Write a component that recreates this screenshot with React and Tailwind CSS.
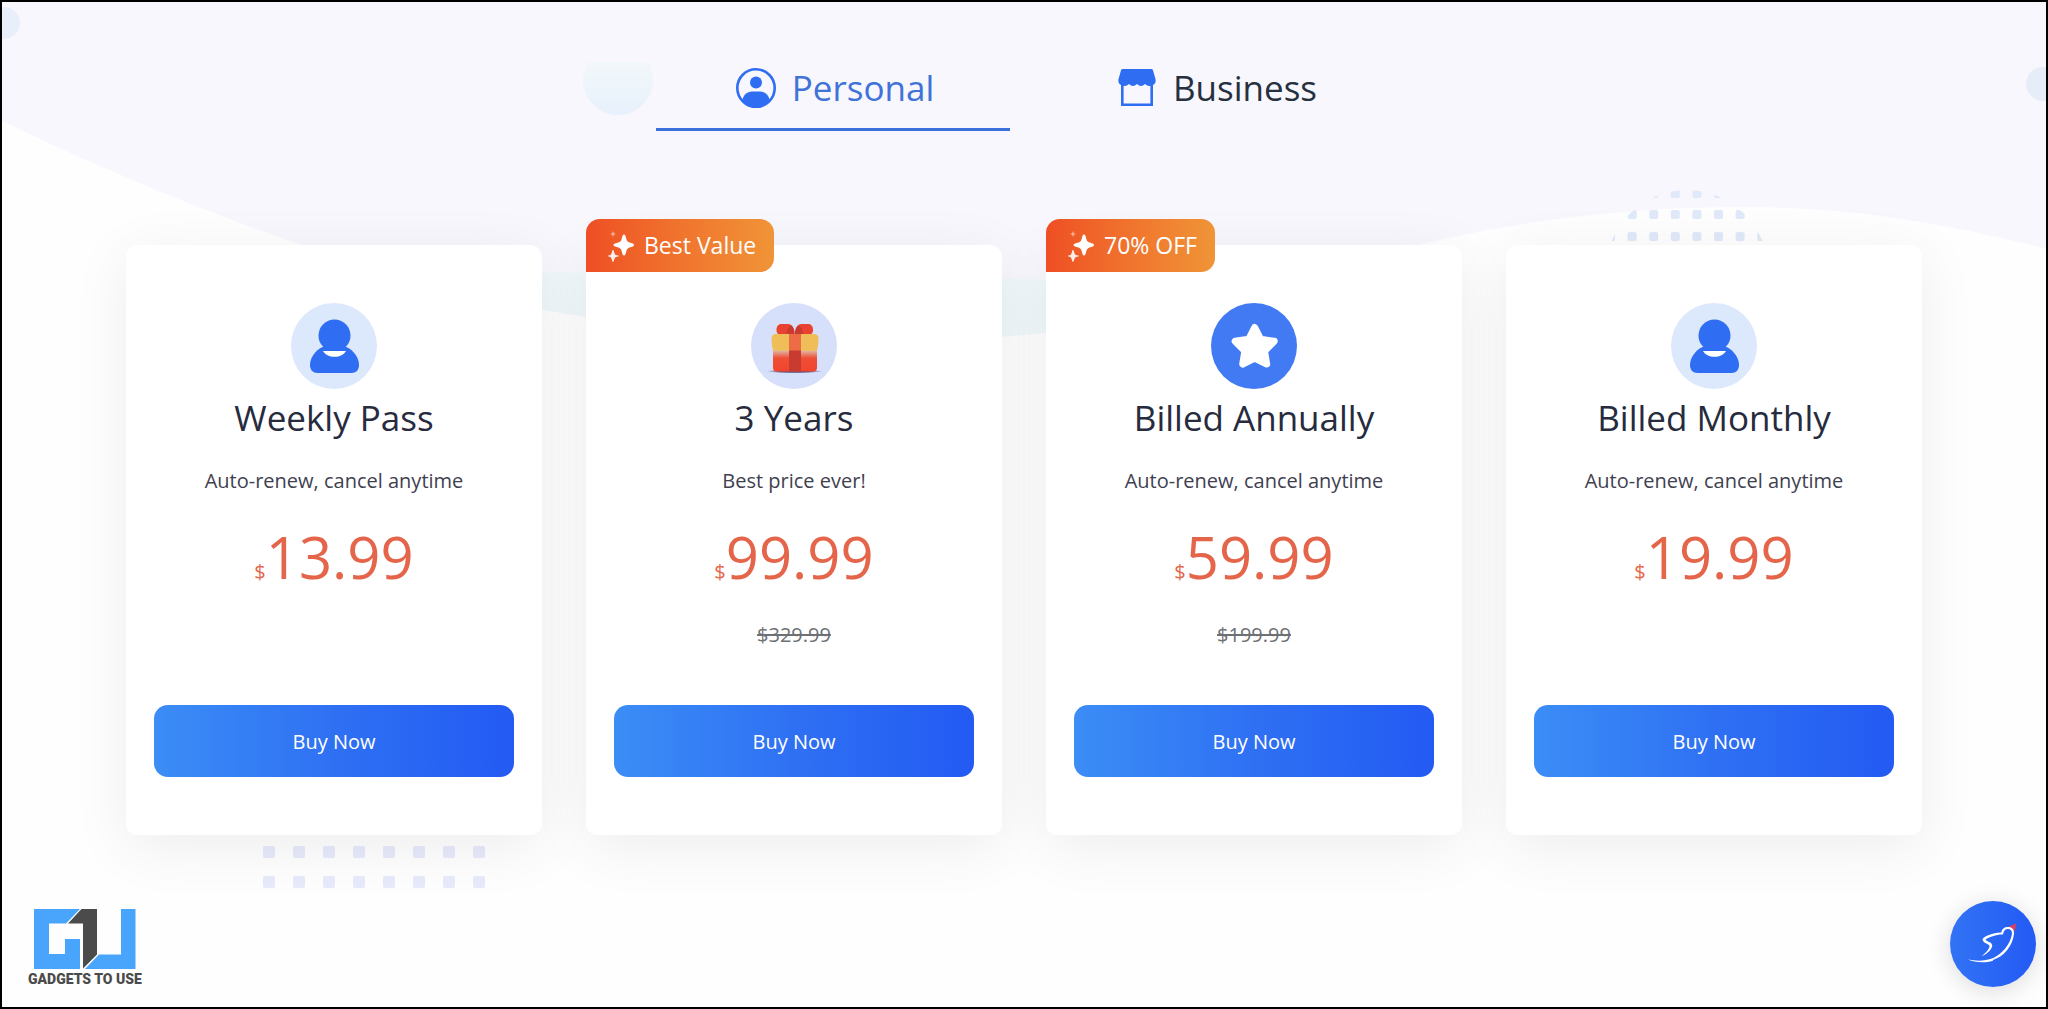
import { useState } from "react";

const plans = [
  {
    id: "weekly",
    name: "Weekly Pass",
    note: "Auto-renew, cancel anytime",
    price: "13.99",
    Icon: UserBadge,
  },
  {
    id: "three-years",
    name: "3 Years",
    note: "Best price ever!",
    price: "99.99",
    oldPrice: "$329.99",
    ribbon: "Best Value",
    Icon: GiftBadge,
  },
  {
    id: "annual",
    name: "Billed Annually",
    note: "Auto-renew, cancel anytime",
    price: "59.99",
    oldPrice: "$199.99",
    ribbon: "70% OFF",
    Icon: StarBadge,
  },
  {
    id: "monthly",
    name: "Billed Monthly",
    note: "Auto-renew, cancel anytime",
    price: "19.99",
    Icon: UserBadge,
  },
];

const tabs = [
  { id: "personal", label: "Personal", Icon: PersonIcon },
  { id: "business", label: "Business", Icon: StoreIcon },
];

function PersonIcon() {
  return (
    <svg className="size-10" viewBox="0 0 40 40" fill="none" aria-hidden="true">
      <circle cx="20" cy="20" r="18.7" stroke="#2f6df2" strokeWidth="2.6" />
      <circle cx="20" cy="14.5" r="6" fill="#2f6df2" />
      <path
        d="M6 33.5C7 27 11 23.5 16 23.5h8c5 0 9 3.5 10 10C30.5 37.5 25.5 40 20 40S9.5 37.5 6 33.5Z"
        fill="#2f6df2"
      />
    </svg>
  );
}

function StoreIcon() {
  return (
    <svg className="size-10" viewBox="0 0 40 40" fill="none" aria-hidden="true">
      <path d="M5.3 14v22.7h29.4V14" stroke="#2f6df2" strokeWidth="2.6" />
      <path
        d="M5.5 1h29q1 0 1.4 1L38.6 11.5Q39.2 16.5 34.5 17.5q-3.500 1.500-6.500-1.500-4 3.800-8 0-4 3.800-8 0-3 3-6.500 1.500Q.8 16.500 1.4 11.5L4.1 2q.4-1 1.4-1Z"
        fill="#2f6df2"
      />
    </svg>
  );
}

function UserBadge() {
  return (
    <svg className="size-[86px]" viewBox="0 0 86 86" aria-hidden="true">
      <circle cx="43" cy="43" r="43" fill="#dce8fb" />
      <path
        d="M31.5 44C24 47.5 19 55 19 62c0 5 3 8 7.5 8h34c4.5 0 7.5-3 7.5-8 0-7-5-14.5-12.5-18Z"
        fill="#2f6df2"
      />
      <circle cx="43.5" cy="32.5" r="16" fill="#2f6df2" />
      <path d="M32 48h23c-2 3.8-6.5 5.8-11.5 5.8S34 51.8 32 48Z" fill="#fff" />
    </svg>
  );
}

function GiftBadge() {
  return (
    <svg className="size-[86px]" viewBox="0 0 86 86" aria-hidden="true">
      <defs>
        <linearGradient id="giftBody" x1="0" y1="0" x2="0" y2="1">
          <stop offset="0.15" stopColor="#e2b5a6" />
          <stop offset="0.45" stopColor="#ee4f35" />
          <stop offset="1" stopColor="#f1452f" />
        </linearGradient>
        <radialGradient id="giftShadow">
          <stop offset="0.5" stopColor="#55507f" />
          <stop offset="1" stopColor="#55507f" stopOpacity="0" />
        </radialGradient>
      </defs>
      <circle cx="43" cy="43" r="43" fill="#d6e0fb" />
      <ellipse cx="43.5" cy="68.3" rx="28" ry="2" fill="url(#giftShadow)" />
      <rect x="22" y="44" width="44" height="24.5" rx="4" fill="url(#giftBody)" />
      <path
        d="M24.500 31h38.500q4.500 0 4.500 4.500 0 6-1.500 12.200H22Q20.500 41.500 20.500 35.500q0-4.500 4-4.500Z"
        fill="#f0be58"
      />
      <path d="M38 31h12v17H38Z" fill="#ee6c45" />
      <path d="M38 47.5h12v21H38Z" fill="#c93a30" />
      <path d="M43.5 31H27c-3-3-1.5-10 3-10h7c4 0 6.5 4 6.500 10Z" fill="#ea4231" />
      <path d="M44 31H60.5c3-3 1.500-10-3-10h-7c-4 0-6.500 4-6.500 10Z" fill="#ea4231" />
      <path
        d="M43.5 31H35.500c0-4 2-7 4.500-8.500 2.500 1.500 3.500 4.500 3.500 8.500ZM44 31h8c0-4-2-7-4.500-8.500-2.500 1.500-3.500 4.500-3.500 8.500Z"
        fill="#c93a30"
      />
    </svg>
  );
}

function StarBadge() {
  return (
    <svg className="size-[86px]" viewBox="0 0 86 86" aria-hidden="true">
      <circle cx="43" cy="43" r="43" fill="#427af3" />
      <path
        d="M43.7 24.5 49.7 36.3 63.2 38.3 53.5 47.9 55.7 61 43.7 55 31.7 61 33.9 47.9 24.2 38.3 37.7 36.3Z"
        fill="#fff"
        stroke="#fff"
        strokeWidth="7"
        strokeLinejoin="round"
      />
    </svg>
  );
}

function Sparkles() {
  return (
    <svg className="h-8 w-[26px]" viewBox="0 0 26 32" fill="#fff" aria-hidden="true">
      <path d="M16 4.500c1.200 0 1.600 1.500 2.200 4 .6 2.600 1.700 3.700 4.300 4.300 2.500.6 3.500 1 3.500 2.200s-1 1.600-3.500 2.200c-2.600.6-3.700 1.700-4.300 4.300-.6 2.500-1 4-2.200 4s-1.600-1.500-2.200-4c-.6-2.600-1.700-3.700-4.300-4.300C7 16.600 5.500 16.200 5.500 15s1.500-1.600 4-2.200c2.600-.6 3.700-1.700 4.300-4.300.6-2.500 1-4 2.200-4Z" />
      <path
        opacity="0.9"
        d="M5 20q.8 0 1.200 2.400t2.400 2.800Q11 25.500 11 26t-2.400.8Q6.600 27.200 6.200 29.600 5.800 32 5 32t-1.200-2.400Q3.400 27.200 1.800 26.800 0 26.500 0 26t1.800-.8Q3.400 24.800 3.800 22.400 4.200 20 5 20Z"
      />
      <path opacity="0.5" d="M5 1l1 2.200L8 4 6 4.800 5 7 4 4.800 2 4l2-.8Z" />
    </svg>
  );
}

function Backdrop() {
  const cols = [0, 1, 2, 3, 4, 5, 6, 7];
  return (
    <svg
      className="absolute inset-x-0 top-0 -z-20 h-auto w-full"
      viewBox="2 2 2044 1005"
      aria-hidden="true"
    >
      <defs>
        <linearGradient id="bubble" x1="0" y1="0" x2="0" y2="1">
          <stop offset="0" stopColor="#f2f8fa" />
          <stop offset="1" stopColor="#e7f0fc" />
        </linearGradient>
        <clipPath id="dotClip">
          <circle cx="1687" cy="271" r="81" />
        </clipPath>
      </defs>
      <path
        d="M300 244C450 300 600 325 760 336C900 344 1000 342 1100 325V262H400Z"
        fill="#f1f8fb"
      />
      <path
        d="M0 0H2048V249C1950 225 1860 207 1745 207C1640 207 1540 217 1430 242C1300 275 1200 292 1050 280C900 270 700 280 560 272C480 272 400 280 299 244C200 210 100 168 0 120Z"
        fill="#f7f7fd"
      />
      <circle cx="4" cy="23" r="16" fill="#e8effa" />
      <circle cx="2043" cy="84" r="17" fill="#e7edf8" />
      <path d="M588 62H648A35 35 0 1 1 588 62Z" fill="url(#bubble)" />
      <g fill="#dfe9fa" clipPath="url(#dotClip)">
        {[189, 210, 232].map((y) =>
          cols.map((c) => (
            <rect key={`${y}-${c}`} x={1606 + c * 21.6} y={y} width="9" height="9" rx="2" />
          ))
        )}
      </g>
      <g fill="#e6eafb">
        {[846, 876].map((y) =>
          cols.map((c) => (
            <rect key={`${y}-${c}`} x={263 + c * 30} y={y} width="12" height="12" rx="2" />
          ))
        )}
      </g>
    </svg>
  );
}

function PlanCard({ plan }) {
  const { Icon } = plan;
  return (
    <article className="relative flex flex-col items-center rounded-xl bg-white px-7 py-[58px] text-center before:absolute before:inset-0 before:-z-10 before:rounded-xl before:shadow-[0_12px_60px_rgba(0,0,0,0.07)]">
      {plan.ribbon && (
        <div className="absolute -top-[26px] left-0 flex h-[53px] items-center gap-2.5 rounded-[14px] rounded-bl-none bg-linear-to-r from-[#ee4e24] to-[#f09437] pr-[18px] pl-[22px] text-[23px] text-white">
          <Sparkles />
          <span>{plan.ribbon}</span>
        </div>
      )}
      <Icon />
      <h2 className="mt-1 text-[35px] leading-[50px] text-[#262b3d]">{plan.name}</h2>
      <p className="mt-6 text-xl leading-7 text-[#3f4150]">{plan.note}</p>
      <p className="mt-[22px] text-[58px] leading-[80px] text-[#e5654a]">
        <span className="text-xl">$</span>
        {plan.price}
      </p>
      <p className="mt-6 min-h-7 text-xl leading-7 text-[#6d7074]">
        {plan.oldPrice && <s>{plan.oldPrice}</s>}
      </p>
      <button
        type="button"
        className="mt-14 h-[72px] w-full rounded-[14px] bg-linear-to-r from-[#3c8df6] via-[#2f70f3] to-[#235af3] pt-0.5 text-xl text-white"
      >
        Buy Now
      </button>
    </article>
  );
}

function Logo() {
  return (
    <div className="absolute bottom-[18px] left-[26px] flex flex-col items-center">
      <svg className="h-[60px] w-[102px]" viewBox="0 0 102 60" aria-hidden="true">
        <path d="M0 0H46L32 14.5H15V45H31V30H46V60H0Z" fill="#48a5fb" />
        <path d="M47.5 0H63V45.5L49 59.5V14.5H34Z" fill="#4b4b4b" />
        <path d="M87 0H101.5V60H51L65 45.5H87Z" fill="#48a5fb" />
      </svg>
      <span className="font-['Roboto',sans-serif] text-sm leading-5 font-black whitespace-nowrap text-[#4b4b4b]">
        GADGETS TO USE
      </span>
    </div>
  );
}

function ChatButton() {
  return (
    <button
      type="button"
      aria-label="Chat"
      className="absolute right-2.5 bottom-5 size-[86px] rounded-full bg-linear-to-r from-[#3273f4] to-[#2459f5] shadow-[0_4px_24px_rgba(0,0,0,0.14)]"
    >
      <svg viewBox="0 0 86 86" fill="none" aria-hidden="true">
        <path d="M59 25.5 66 22.5 65 30Z" fill="#e0405e" />
        <path
          d="M51.5 31.500C51.500 28 54.500 26 58 26 62 26 64.5 28.5 64 33 62.500 45 54 55.500 43 59L42.500 57.500C52 53 60.500 43.500 62 32.500 62 29.500 60.500 28 58 28 55 28 53.500 30 53 33.500 48 33 38.500 36 35.500 38.500 36.500 41 42 40.500 42.300 44.500 42 48 38 52.500 31.500 55.500 36 51.500 39.500 48 39.500 45 39 42.500 33 42.500 32.500 38.500 32.500 35.500 45 31 51.500 31.500Z"
          fill="#fff"
        />
        <path d="M18 58.500C27 60.300 35 60 43 57.300V59.800C34 62.300 25 61.500 18 58.500Z" fill="#fff" />
      </svg>
    </button>
  );
}

const App = () => {
  const [active, setActive] = useState("personal");

  return (
    <div className="relative isolate min-h-screen overflow-hidden border-2 border-black bg-[#fefefe] px-[124px] pt-[62px] pb-[172px] font-['Open_Sans','Noto_Sans',sans-serif]">
      <Backdrop />

      <nav className="flex justify-center gap-7" role="tablist">
        {tabs.map(({ id, label, Icon }) => (
          <button
            key={id}
            type="button"
            role="tab"
            aria-selected={active === id}
            onClick={() => setActive(id)}
            className={`flex w-[354px] items-center justify-center gap-4 border-b-[3px] pb-4 pl-1 text-[35px] leading-[48px] ${
              active === id
                ? "border-[#3b6fdc] text-[#3f73d8]"
                : "border-transparent text-[#27303f]"
            }`}
          >
            <Icon />
            {label}
          </button>
        ))}
      </nav>

      <main className="mt-[114px] grid grid-cols-4 gap-11">
        {plans.map((plan) => (
          <PlanCard key={plan.id} plan={plan} />
        ))}
      </main>

      <Logo />
      <ChatButton />
    </div>
  );
};

export default App;
